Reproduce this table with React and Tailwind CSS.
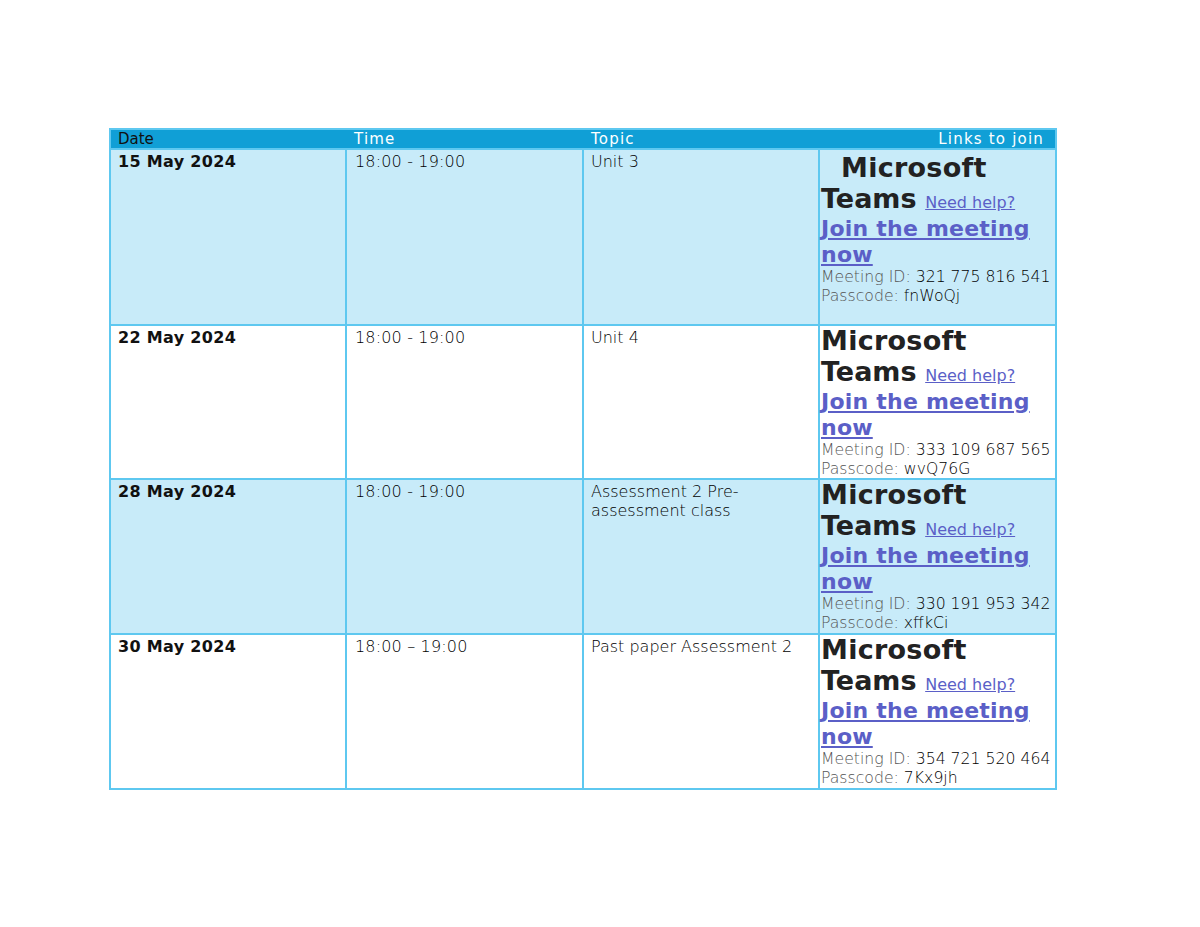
import React from "react";

const rows = [
  {
    date: "15 May 2024",
    time: "18:00 - 19:00",
    topic: "Unit 3",
    id: "321 775 816 541",
    pass: "fnWoQj",
    shaded: true,
    indent: true,
    h: "h-[176px]",
  },
  {
    date: "22 May 2024",
    time: "18:00 - 19:00",
    topic: "Unit 4",
    id: "333 109 687 565",
    pass: "wvQ76G",
    shaded: false,
    h: "h-[154px]",
  },
  {
    date: "28 May 2024",
    time: "18:00 - 19:00",
    topic: "Assessment 2 Pre-assessment class",
    id: "330 191 953 342",
    pass: "xffkCi",
    shaded: true,
    h: "h-[155px]",
  },
  {
    date: "30 May 2024",
    time: "18:00 – 19:00",
    topic: "Past paper Assessment 2",
    id: "354 721 520 464",
    pass: "7Kx9jh",
    shaded: false,
    h: "h-[155px]",
  },
];

function TeamsLink({ id, pass, indent }) {
  return (
    <div className={`text-[#222] ${indent ? "pt-[4px]" : "pt-[1px]"}`}>
      <div className="text-[27px] font-bold leading-[28px] tracking-[0.01em]">
        {indent && <span className="inline-block w-[20px]" />}
        Microsoft
      </div>
      <div className="text-[27px] leading-[34px]">
        <span className="font-bold">Teams</span>{" "}
        <a
          href="#"
          className="text-[16px] leading-none text-[#5b5fc7] underline"
        >
          Need help?
        </a>
      </div>
      <a
        href="#"
        className="block text-[22px] font-bold leading-[26px] text-[#5b5fc7] underline tracking-[0.01em]"
      >
        Join the meeting now
      </a>
      <div className="text-[15.7px] font-extralight leading-[18px] whitespace-nowrap">
        <span className="text-[#555]">Meeting ID: </span>
        <span className="text-black">{id}</span>
      </div>
      <div className="text-[15.7px] font-extralight leading-[19px]">
        <span className="text-[#555]">Passcode: </span>
        <span className="text-black">{pass}</span>
      </div>
    </div>
  );
}

export default function App() {
  return (
    <div
      className="min-h-screen bg-white pt-[128px] pl-[109px]"
      style={{ fontFamily: '"DejaVu Sans", Verdana, sans-serif' }}
    >
      <table className="w-[946px] table-fixed border-collapse">
        <colgroup>
          <col className="w-[236px]" />
          <col className="w-[237px]" />
          <col className="w-[236px]" />
          <col className="w-[237px]" />
        </colgroup>
        <thead>
          <tr className="h-[20px] bg-[#109fd6] text-[15px] leading-[18px]">
            <th className="border-t-2 border-l-2 border-[#5ec8f0] px-[7px] text-left font-normal text-[#111]">
              Date
            </th>
            <th className="border-t-2 border-[#5ec8f0] px-[8px] text-left font-normal tracking-[0.08em] text-white">
              Time
            </th>
            <th className="border-t-2 border-[#5ec8f0] px-[8px] text-left font-normal tracking-[0.08em] text-white">
              Topic
            </th>
            <th className="border-t-2 border-r-2 border-[#5ec8f0] pr-[11px] text-right font-normal tracking-[0.08em] text-white">
              Links to join
            </th>
          </tr>
        </thead>
        <tbody>
          {rows.map((r) => (
            <tr
              key={r.date}
              className={`${r.h} ${r.shaded ? "bg-[#c8ebf9]" : "bg-white"}`}
            >
              <td className="border-2 border-[#5ec8f0] px-[7px] pt-[2px] align-top text-[16px] font-bold leading-[19px] tracking-[0.02em] text-[#111]">
                {r.date}
              </td>
              <td className="border-2 border-[#5ec8f0] px-[8px] pt-[2px] align-top text-[16px] font-extralight leading-[19px] tracking-[0.01em] text-black">
                {r.time}
              </td>
              <td className="border-2 border-[#5ec8f0] px-[7px] pt-[2px] align-top text-[16px] font-extralight leading-[19px] text-black">
                {r.topic}
              </td>
              <td className="border-2 border-[#5ec8f0] pl-[1px] pr-[2px] align-top">
                <TeamsLink id={r.id} pass={r.pass} indent={r.indent} />
              </td>
            </tr>
          ))}
        </tbody>
      </table>
    </div>
  );
}
